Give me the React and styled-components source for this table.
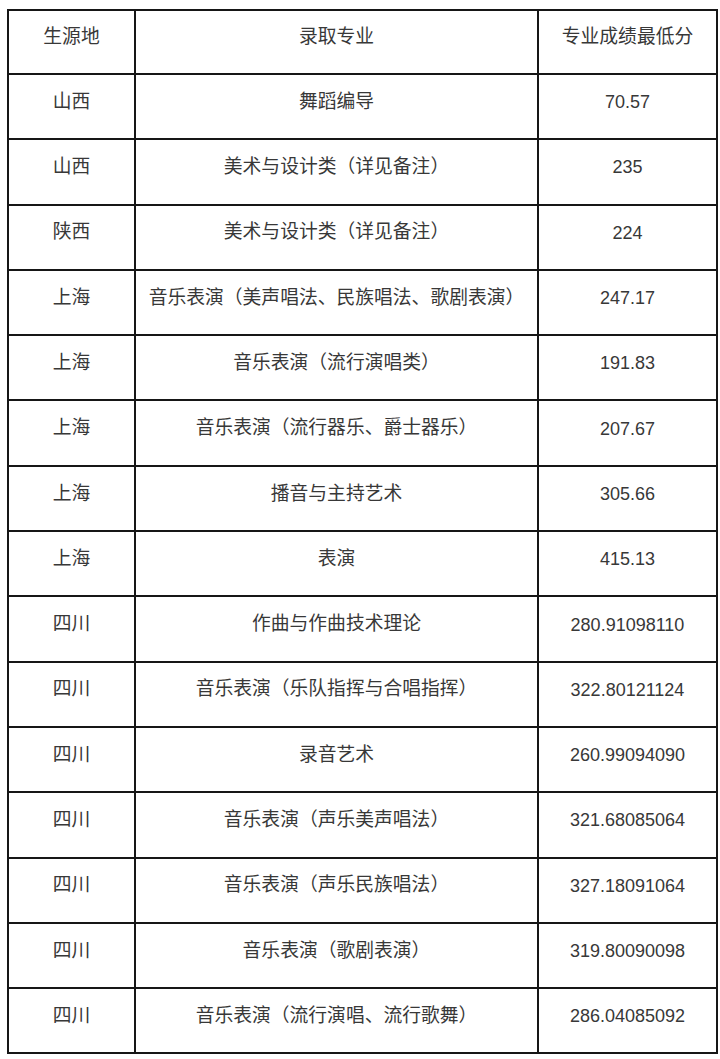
import styled, { createGlobalStyle } from "styled-components";

const GlobalStyle = createGlobalStyle`
    html, body {
        margin: 0;
        padding: 0;
        background: #fff;
    }
    body {
        font-family: "Liberation Sans", "Noto Sans CJK SC", sans-serif;
    }
`;

const rows = [
    ["山西", "舞蹈编导", "70.57"],
    ["山西", "美术与设计类（详见备注）", "235"],
    ["陕西", "美术与设计类（详见备注）", "224"],
    ["上海", "音乐表演（美声唱法、民族唱法、歌剧表演）", "247.17"],
    ["上海", "音乐表演（流行演唱类）", "191.83"],
    ["上海", "音乐表演（流行器乐、爵士器乐）", "207.67"],
    ["上海", "播音与主持艺术", "305.66"],
    ["上海", "表演", "415.13"],
    ["四川", "作曲与作曲技术理论", "280.91098110"],
    ["四川", "音乐表演（乐队指挥与合唱指挥）", "322.80121124"],
    ["四川", "录音艺术", "260.99094090"],
    ["四川", "音乐表演（声乐美声唱法）", "321.68085064"],
    ["四川", "音乐表演（声乐民族唱法）", "327.18091064"],
    ["四川", "音乐表演（歌剧表演）", "319.80090098"],
    ["四川", "音乐表演（流行演唱、流行歌舞）", "286.04085092"],
];

const App = () => {
    return (
        <>
            <GlobalStyle />
            <Page>
                <Table>
                    <Cell>生源地</Cell>
                    <Cell>录取专业</Cell>
                    <Cell>专业成绩最低分</Cell>
                    {rows.map(([place, major, score], i) => (
                        <Row key={i}>
                            <Cell>{place}</Cell>
                            <Cell>{major}</Cell>
                            <Cell $num>{score}</Cell>
                        </Row>
                    ))}
                </Table>
            </Page>
        </>
    );
};

const Page = styled.div`
    padding: 9px 0 0 7px;
    width: 720px;
    box-sizing: border-box;
`;

const Table = styled.div`
    display: grid;
    grid-template-columns: 125px 401px 177px;
    grid-template-rows: 62px repeat(15, 63.3px);
    gap: 2px;
    padding: 2px;
    width: max-content;
    background: #161616;
`;

// 行只是为了分组，本身不参与布局
const Row = styled.div`
    display: contents;
`;

const Cell = styled.div`
    display: flex;
    align-items: center;
    justify-content: center;
    padding-bottom: 9px;
    box-sizing: border-box;
    background: #fff;
    color: #383838;
    font-size: ${(p) => (p.$num ? "18px" : "18.8px")};
    line-height: 1;
    white-space: nowrap;
`;

export default App;
